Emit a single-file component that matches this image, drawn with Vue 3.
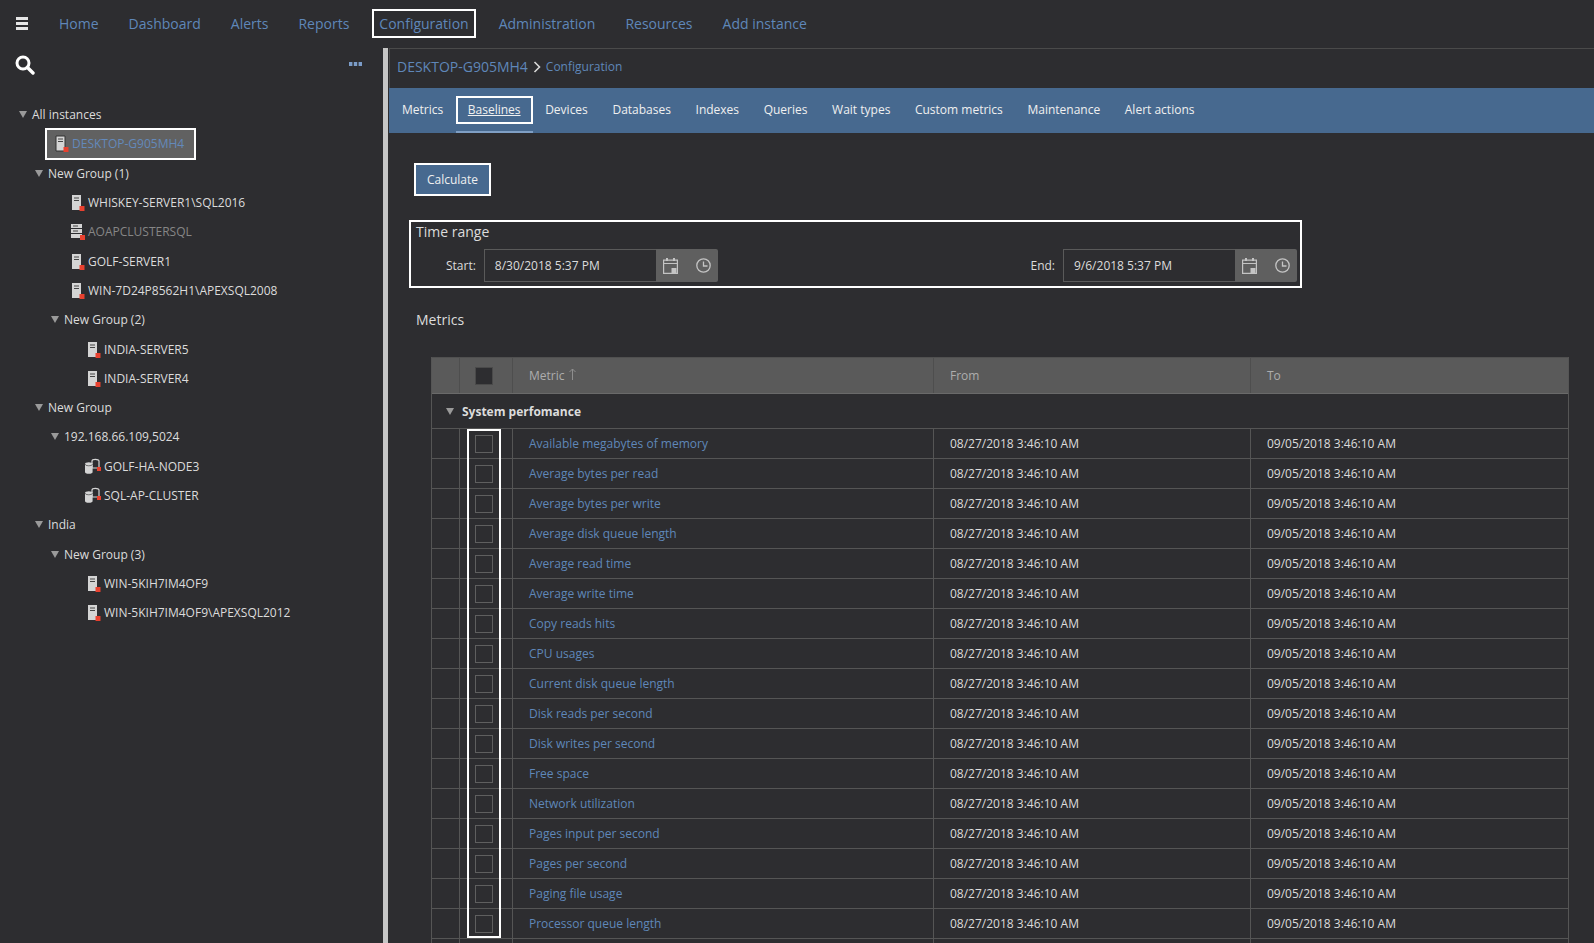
<script setup>
const navLinks = ['Home', 'Dashboard', 'Alerts', 'Reports', 'Configuration', 'Administration', 'Resources', 'Add instance']
const tabs = ['Metrics', 'Baselines', 'Devices', 'Databases', 'Indexes', 'Queries', 'Wait types', 'Custom metrics', 'Maintenance', 'Alert actions']

// tree rows, depth drives the indent
const tree = [
  { label: 'All instances', depth: 0, group: true },
  { label: 'DESKTOP-G905MH4', depth: 1, icon: 'server', selected: true },
  { label: 'New Group (1)', depth: 1, group: true },
  { label: 'WHISKEY-SERVER1\\SQL2016', depth: 2, icon: 'server' },
  { label: 'AOAPCLUSTERSQL', depth: 2, icon: 'stack', muted: true },
  { label: 'GOLF-SERVER1', depth: 2, icon: 'server' },
  { label: 'WIN-7D24P8562H1\\APEXSQL2008', depth: 2, icon: 'server' },
  { label: 'New Group (2)', depth: 2, group: true },
  { label: 'INDIA-SERVER5', depth: 3, icon: 'server' },
  { label: 'INDIA-SERVER4', depth: 3, icon: 'server' },
  { label: 'New Group', depth: 1, group: true },
  { label: '192.168.66.109,5024', depth: 2, group: true },
  { label: 'GOLF-HA-NODE3', depth: 3, icon: 'cluster' },
  { label: 'SQL-AP-CLUSTER', depth: 3, icon: 'cluster' },
  { label: 'India', depth: 1, group: true },
  { label: 'New Group (3)', depth: 2, group: true },
  { label: 'WIN-5KIH7IM4OF9', depth: 3, icon: 'server' },
  { label: 'WIN-5KIH7IM4OF9\\APEXSQL2012', depth: 3, icon: 'server' }
]

function rowIndent(row) {
  return (row.group ? 19 + 16 * row.depth : 29 + 16 * row.depth) + 'px'
}

const metrics = [
  'Available megabytes of memory', 'Average bytes per read', 'Average bytes per write',
  'Average disk queue length', 'Average read time', 'Average write time', 'Copy reads hits',
  'CPU usages', 'Current disk queue length', 'Disk reads per second', 'Disk writes per second',
  'Free space', 'Network utilization', 'Pages input per second', 'Pages per second',
  'Paging file usage', 'Processor queue length'
]
const ranges = [
  { label: 'Start:', value: '8/30/2018 5:37 PM' },
  { label: 'End:', value: '9/6/2018 5:37 PM' }
]
</script>

<template>
  <div class="page">
    <header class="topbar">
      <svg class="burger" width="12" height="13" viewBox="0 0 12 13">
        <path d="M0 0h12v3H0zM0 5h12v3H0zM0 10h12v3H0z" fill="#e6e6e6" />
      </svg>
      <nav class="nav">
        <a v-for="link in navLinks" :key="link" class="nav-link" :class="{ active: link === 'Configuration' }">{{ link }}</a>
      </nav>
    </header>

    <div class="body">
      <aside class="sidebar">
        <div class="search-row">
          <svg width="20" height="20" viewBox="0 0 20 20">
            <circle cx="8" cy="8" r="6" fill="none" stroke="#fff" stroke-width="3" />
            <path d="M12.5 12.5 18 18" stroke="#fff" stroke-width="3.4" stroke-linecap="round" />
          </svg>
          <svg width="13" height="5" viewBox="0 0 13 5">
            <path d="M0 0h3.4v4H0zM4.8 0h3.4v4H4.800zM9.600 0H13v4H9.600z" fill="#7b9cc8" />
          </svg>
        </div>

        <div class="tree">
          <div v-for="row in tree" :key="row.label" class="tree-row" :style="{ paddingLeft: rowIndent(row) }">
            <template v-if="row.group">
              <span class="arrow"></span>
              <span class="group-label">{{ row.label }}</span>
            </template>
            <span v-else class="leaf" :class="{ selected: row.selected, muted: row.muted }">
              <svg v-if="row.icon === 'server'" class="leaf-icon" width="14" height="17" viewBox="0 0 14 17">
                <path class="server-body" d="M1 1h9v15H1z" fill="#d4d4d4" />
                <path d="M3 3.500h5v1H3zM3 6h5v1H3z" fill="#444" />
                <path d="M8.500 12h5v5h-5z" fill="#e8412f" />
              </svg>
              <svg v-else-if="row.icon === 'stack'" class="leaf-icon" width="14" height="17" viewBox="0 0 14 17">
                <path d="M0 1h11v4H0zM0 6h11v4H0zM0 11h11v4H0z" fill="#d4d4d4" />
                <path d="M2 2.500h5v1H2zM2 7.500h5v1H2z" fill="#444" />
                <path d="M9 12h5v5H9z" fill="#e8412f" />
              </svg>
              <svg v-else class="leaf-icon cluster" width="17" height="17" viewBox="0 0 17 17">
                <path d="M8 3a3.500 1.600 0 0 1 7 0v7H8z" fill="#2d2d30" stroke="#d4d4d4" stroke-width="1.200" />
                <path d="M1 6a3.800 1.800 0 0 1 7.600 0v8a3.800 1.800 0 0 1-7.600 0z" fill="#d4d4d4" />
                <path d="M1 6a3.800 1.800 0 0 0 7.600 0" fill="none" stroke="#555" stroke-width=".8" />
                <path d="M13 9h4v4h-4z" fill="#e8412f" />
              </svg>
              {{ row.label }}
            </span>
          </div>
        </div>
      </aside>

      <div class="splitter"></div>

      <main class="content">
        <div class="breadcrumb">
          <span class="crumb-host">DESKTOP-G905MH4</span>
          <svg width="9" height="12" viewBox="0 0 9 12">
            <path d="M1.500 1 6.500 6l-5 5" fill="none" stroke="#d8d8d8" stroke-width="1.600" />
          </svg>
          <span class="crumb-page">Configuration</span>
        </div>

        <div class="tabs">
          <a v-for="tab in tabs" :key="tab" class="tab" :class="{ active: tab === 'Baselines' }">
            <span class="tab-text">{{ tab }}</span>
          </a>
        </div>

        <div class="panel">
          <button class="calc-btn" type="button">Calculate</button>

          <fieldset class="range-box">
            <div class="range-title">Time range</div>
            <div class="range-row">
              <div v-for="range in ranges" :key="range.label" class="range-field">
                <label class="range-label">{{ range.label }}</label>
                <div class="range-value">{{ range.value }}</div>
                <div class="range-btns">
                  <svg width="15" height="16" viewBox="0 0 15 16">
                    <path d="M.6 2.100h13.800v13.300H.6zM0 5.500h15" fill="none" stroke="#c4c4c4" stroke-width="1.200" />
                    <path d="M3 0h2v3H3zM10 0h2v3h-2zM8.500 10h5v5h-5z" fill="#c4c4c4" />
                  </svg>
                  <svg width="15" height="15" viewBox="0 0 15 15">
                    <circle cx="7.500" cy="7.500" r="6.700" fill="none" stroke="#c4c4c4" stroke-width="1.300" />
                    <path d="M7.500 3.500V8h4" fill="none" stroke="#c4c4c4" stroke-width="1.300" />
                  </svg>
                </div>
              </div>
            </div>
          </fieldset>

          <h2 class="metrics-title">Metrics</h2>

          <div class="grid">
            <div class="grid-row head">
              <div class="cell"></div>
              <div class="cell check-cell"><span class="check dark"></span></div>
              <div class="cell">
                Metric
                <svg class="sort" width="7" height="12" viewBox="0 0 7 12">
                  <path d="M3.500 12V1M.5 4 3.500 1l3 3" fill="none" stroke="#8e8e8e" stroke-width="1" />
                </svg>
              </div>
              <div class="cell">From</div>
              <div class="cell">To</div>
            </div>
            <div class="group-row">
              <span class="arrow"></span>
              <span>System perfomance</span>
            </div>
            <div v-for="metric in metrics" :key="metric" class="grid-row">
              <div class="cell"></div>
              <div class="cell check-cell"><span class="check"></span></div>
              <div class="cell metric-link">{{ metric }}</div>
              <div class="cell">08/27/2018 3:46:10 AM</div>
              <div class="cell">09/05/2018 3:46:10 AM</div>
            </div>
            <!-- next row is below the fold -->
            <div class="grid-row">
              <div class="cell"></div>
              <div class="cell"></div>
              <div class="cell"></div>
              <div class="cell"></div>
              <div class="cell"></div>
            </div>
            <div class="check-highlight"></div>
          </div>
        </div>
      </main>
    </div>
  </div>
</template>

<style>
html, body {
  margin: 0;
  background: #2d2d30;
}
</style>

<style scoped>
.page {
  height: 943px;
  display: flex;
  flex-direction: column;
  overflow: hidden;
  background: #2d2d30;
  color: #dcdcdc;
  font-family: "Open Sans", "Liberation Sans", sans-serif;
  font-size: 12px;
}

/* top navigation */
.topbar {
  height: 48px;
  flex: none;
  display: flex;
  align-items: center;
  padding: 0 0 1px 16px;
  box-sizing: border-box;
}
.burger {
  margin-right: 24px;
}
.nav {
  display: flex;
  gap: 16px;
}
.nav-link {
  padding: 3px 5px;
  border: 2px solid transparent;
  font-size: 14px;
  line-height: 19px;
  color: #5f87b9;
}
.nav-link.active {
  border-color: #fff;
}

.body {
  flex: 1;
  display: flex;
  min-height: 0;
}

/* left tree */
.sidebar {
  width: 383px;
  flex: none;
}
.search-row {
  height: 52px;
  display: flex;
  align-items: flex-start;
  justify-content: space-between;
  padding: 7px 21px 0 15px;
  box-sizing: border-box;
}
.search-row svg:last-child {
  margin-top: 7px;
}
.tree-row {
  height: 29.3px;
  display: flex;
  align-items: center;
  box-sizing: border-box;
}
.arrow {
  width: 0;
  height: 0;
  border-left: 4.5px solid transparent;
  border-right: 4.5px solid transparent;
  border-top: 7px solid #9a9a9a;
  margin-right: 5px;
  flex: none;
}
.group-label {
  white-space: nowrap;
}
.leaf {
  display: inline-flex;
  align-items: center;
  height: 32px;
  padding: 0 10px 0 8px;
  border: 2px solid transparent;
  box-sizing: border-box;
  white-space: nowrap;
}
.leaf-icon {
  flex: none;
  margin-right: 3px;
}
.leaf-icon.cluster {
  margin-left: -3px;
}
.leaf.selected {
  background: #616161;
  border-color: #fff;
  color: #6389bb;
}
.leaf.selected .server-body {
  stroke: #333;
  stroke-width: 1;
}
.leaf.muted {
  color: #868686;
}

.splitter {
  width: 5px;
  flex: none;
  background: #c6c6c6;
  margin-right: 1px;
}

/* right side */
.content {
  flex: 1;
  min-width: 0;
  display: flex;
  flex-direction: column;
}
.breadcrumb {
  height: 40px;
  flex: none;
  display: flex;
  align-items: center;
  gap: 5px;
  padding: 0 0 4px 7px;
  box-sizing: border-box;
  border-top: 1px solid #4a4a4a;
  border-left: 1px solid #4a4a4a;
}
.crumb-host {
  font-size: 14px;
  color: #5f87b9;
}
.crumb-page {
  color: #5f87b9;
  font-size: 12px;
  margin-left: -1px;
}

.tabs {
  height: 45px;
  flex: none;
  display: flex;
  background: #47698f;
}
.tab {
  display: flex;
  align-items: center;
  padding: 0 0.3px;
  border-bottom: 2px solid transparent;
  color: #f0f0f0;
  box-sizing: border-box;
}
.tab:first-child {
  margin-left: 0.7px;
}
.tab-text {
  padding: 4px 10px;
  border: 2px solid transparent;
  line-height: 16px;
}
.tab.active {
  border-bottom-color: #7f9fc4;
}
.tab.active .tab-text {
  border-color: #fff;
  text-decoration: underline;
  margin-top: 1px;
}

.panel {
  padding: 30px 25px 0 25px;
}
.calc-btn {
  display: block;
  width: 77px;
  height: 33px;
  padding: 0;
  background: #47698f;
  border: 2px solid #fff;
  color: #f0f0f0;
  font: inherit;
}
.range-box {
  margin: 24px 0 0 -5px;
  padding: 0 3px 0 5px;
  width: 893px;
  height: 68px;
  box-sizing: border-box;
  border: 2px solid #fff;
  min-inline-size: 0;
}
.range-title {
  font-size: 14px;
  line-height: 20px;
  margin-bottom: 7px;
}
.range-row {
  display: flex;
  justify-content: space-between;
  padding-left: 30px;
}
.range-field {
  display: flex;
  align-items: center;
}
.range-label {
  margin-right: 8px;
}
.range-value {
  width: 172px;
  height: 33px;
  line-height: 31px;
  padding-left: 10px;
  box-sizing: border-box;
  border: 1px solid #5a5a5a;
  border-right: none;
}
.range-btns {
  width: 62px;
  height: 33px;
  display: flex;
  align-items: center;
  gap: 18px;
  padding-left: 7px;
  box-sizing: border-box;
  background: #5f5f5f;
  border-radius: 0 2px 2px 0;
}
.metrics-title {
  margin: 21px 0 0;
  padding-left: 2px;
  font-size: 14px;
  font-weight: 400;
  line-height: 22px;
}

/* metrics table */
.grid {
  position: relative;
  margin: 26px 0 0 17px;
  width: 1138px;
  border-left: 1px solid #555;
  border-right: 1px solid #555;
  box-sizing: border-box;
}
.grid-row {
  display: grid;
  grid-template-columns: 28px 53px 421px 317px 1fr;
  height: 30px;
  box-sizing: border-box;
  border-bottom: 1px solid #555;
}
.grid-row.head {
  height: 37px;
  background: #5a5a5a;
  color: #adadad;
  border-top: 1px solid #505050;
  border-bottom: 1px solid #6a6a6a;
}
.cell {
  display: flex;
  align-items: center;
  gap: 4px;
  padding-left: 16px;
  border-right: 1px solid #555;
  white-space: nowrap;
}
.cell:last-child {
  border-right: none;
}
.head .cell {
  border-right-color: #4e4e4e;
}
.check-cell {
  padding-left: 15px;
}
.check {
  width: 18px;
  height: 18px;
  box-sizing: border-box;
  border: 1px solid #5f5f5f;
}
.check.dark {
  background: #2d2d30;
  border-color: #4a4a4a;
}
.sort {
  margin-top: -3px;
}
.group-row {
  height: 35px;
  box-sizing: border-box;
  display: flex;
  align-items: center;
  gap: 3px;
  padding-left: 14px;
  font-weight: 700;
  border-bottom: 1px solid #555;
}
.metric-link {
  color: #5f87b9;
}
.check-highlight {
  position: absolute;
  left: 35px;
  top: 72px;
  width: 34px;
  height: 509px;
  box-sizing: border-box;
  border: 2px solid #fff;
}
</style>
